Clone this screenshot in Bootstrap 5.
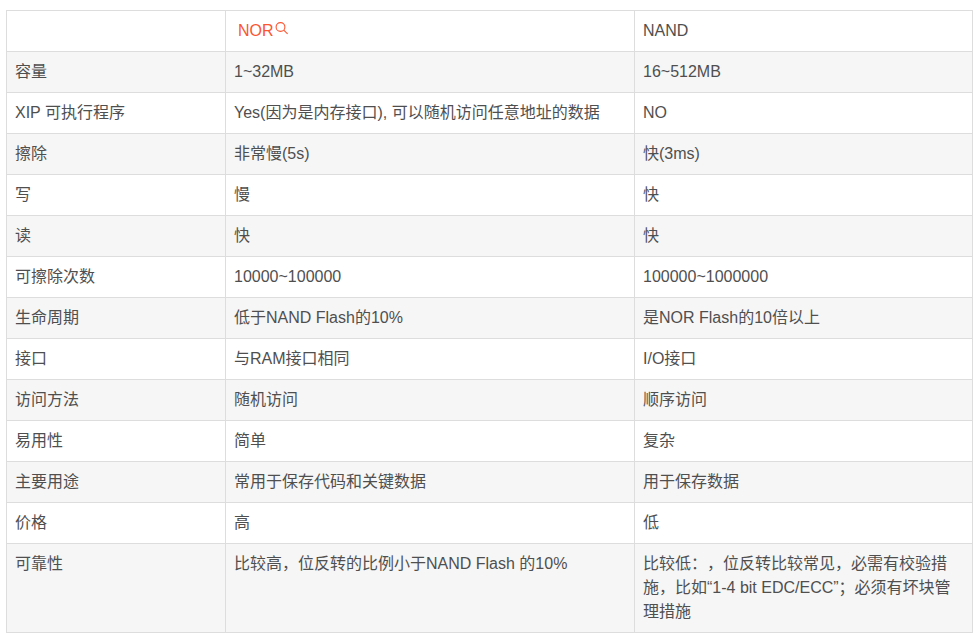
<!DOCTYPE html>
<html lang="zh-CN">
<head>
<meta charset="utf-8">
<title>NOR NAND</title>
<link rel="stylesheet" href="https://cdn.jsdelivr.net/npm/bootstrap@5.3.0/dist/css/bootstrap.min.css">
<style>
body{background:#fff;padding:10px 0 0 6px;font-family:"Liberation Sans","Noto Sans CJK SC",sans-serif;overflow:hidden}
.cmp-table{width:967px;table-layout:fixed;border-collapse:collapse;margin:0;font-size:16px;line-height:24px;color:#4f4f4f;text-spacing-trim:space-all;--bs-table-color:#4f4f4f;--bs-table-striped-color:#4f4f4f;--bs-table-striped-bg:#f6f6f6;--bs-table-border-color:#ddd;--bs-table-bg:#fff}
.cmp-table td{padding:8px;border:1px solid #ddd;vertical-align:top}
.cmp-table>thead{border-bottom:0}
.cmp-link{color:#fc5531;text-decoration:none}
.cmp-link svg{vertical-align:top;margin-top:3px;margin-left:1px}
</style>
</head>
<body>
<table class="table table-striped cmp-table">
<colgroup><col style="width:219px"><col style="width:409px"><col></colgroup>
<thead>
<tr><td></td><td><span class="cmp-link ms-1">NOR<svg width="14" height="13" viewBox="0 0 14 13" fill="none" stroke="#fc5531" stroke-width="1.1"><circle cx="5.5" cy="5" r="4.4"/><path d="M8.7 8.2 L12.6 11.8"/></svg></span></td><td>NAND</td></tr>
</thead>
<tbody>
<tr><td>容量</td><td>1~32MB</td><td>16~512MB</td></tr>
<tr><td>XIP 可执行程序</td><td>Yes(因为是内存接口), 可以随机访问任意地址的数据</td><td>NO</td></tr>
<tr><td>擦除</td><td>非常慢(5s)</td><td>快(3ms)</td></tr>
<tr><td>写</td><td>慢</td><td>快</td></tr>
<tr><td>读</td><td>快</td><td>快</td></tr>
<tr><td>可擦除次数</td><td>10000~100000</td><td>100000~1000000</td></tr>
<tr><td>生命周期</td><td>低于NAND Flash的10%</td><td>是NOR Flash的10倍以上</td></tr>
<tr><td>接口</td><td>与RAM接口相同</td><td>I/O接口</td></tr>
<tr><td>访问方法</td><td>随机访问</td><td>顺序访问</td></tr>
<tr><td>易用性</td><td>简单</td><td>复杂</td></tr>
<tr><td>主要用途</td><td>常用于保存代码和关键数据</td><td>用于保存数据</td></tr>
<tr><td>价格</td><td>高</td><td>低</td></tr>
<tr><td>可靠性</td><td>比较高，位反转的比例小于NAND Flash 的10%</td><td>比较低：，位反转比较常见，必需有校验措施，比如“1-4 bit EDC/ECC”；必须有坏块管理措施</td></tr>
</tbody>
</table>
<script src="https://cdn.jsdelivr.net/npm/bootstrap@5.3.0/dist/js/bootstrap.bundle.min.js"></script>
</body>
</html>
